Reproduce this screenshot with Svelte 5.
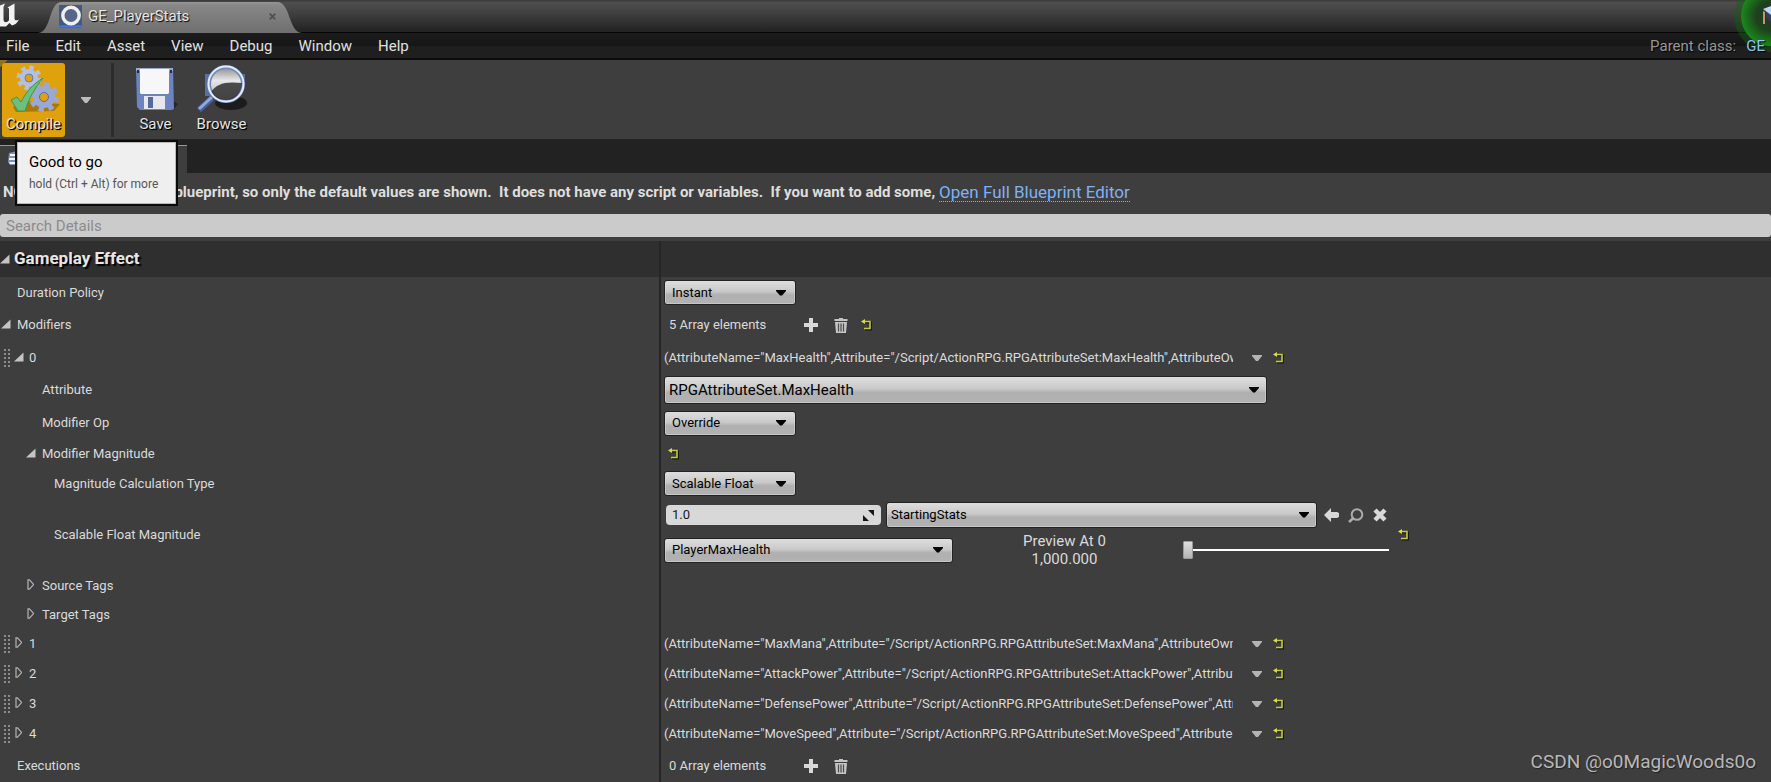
<script lang="ts">
	interface Row {
		id: string;
		label: string;
		size: string;
		depth: number;
		// null = leaf row without an expander
		open: boolean | null;
		kind: 'select' | 'array' | 'summary' | 'reset' | 'scalable' | 'none';
		value?: string;
		wide?: boolean;
		canReset?: boolean;
		element?: boolean;
	}

	const menus = ['File', 'Edit', 'Asset', 'View', 'Debug', 'Window', 'Help'];

	function summary(attr: string): string {
		return `(AttributeName="${attr}",Attribute="/Script/ActionRPG.RPGAttributeSet:${attr}",AttributeOwner="/Script/CoreUObject.Class'/Script/ActionRPG.RPGAttributeSet'")`;
	}

	const rows: Row[] = [
		{ id: 'duration', label: 'Duration Policy', size: 'h31', depth: 0, open: null, kind: 'select', value: 'Instant' },
		{ id: 'modifiers', label: 'Modifiers', size: 'h34', depth: 0, open: true, kind: 'array', value: '5 Array elements', canReset: true },
		{ id: 'm0', label: '0', size: 'h32', depth: 1, open: true, kind: 'summary', value: summary('MaxHealth'), element: true },
		{ id: 'attribute', label: 'Attribute', size: 'h32', depth: 2, open: null, kind: 'select', value: 'RPGAttributeSet.MaxHealth', wide: true },
		{ id: 'op', label: 'Modifier Op', size: 'h34', depth: 2, open: null, kind: 'select', value: 'Override' },
		{ id: 'magnitude', label: 'Modifier Magnitude', size: 'h28', depth: 2, open: true, kind: 'reset' },
		{ id: 'calc', label: 'Magnitude Calculation Type', size: 'h31', depth: 3, open: null, kind: 'select', value: 'Scalable Float' },
		{ id: 'scalable', label: 'Scalable Float Magnitude', size: 'h72', depth: 3, open: null, kind: 'scalable' },
		{ id: 'source', label: 'Source Tags', size: 'h30', depth: 2, open: false, kind: 'none' },
		{ id: 'target', label: 'Target Tags', size: 'h28', depth: 2, open: false, kind: 'none' },
		{ id: 'm1', label: '1', size: 'h30', depth: 1, open: false, kind: 'summary', value: summary('MaxMana'), element: true },
		{ id: 'm2', label: '2', size: 'h30', depth: 1, open: false, kind: 'summary', value: summary('AttackPower'), element: true },
		{ id: 'm3', label: '3', size: 'h30', depth: 1, open: false, kind: 'summary', value: summary('DefensePower'), element: true },
		{ id: 'm4', label: '4', size: 'h30', depth: 1, open: false, kind: 'summary', value: summary('MoveSpeed'), element: true },
		{ id: 'executions', label: 'Executions', size: 'h34', depth: 0, open: null, kind: 'array', value: '0 Array elements' }
	];

	let magnitude = $state('1.0');
	let preview = $state(0);
	let search = $state('');
</script>

{#snippet resetButton()}
	<button class="icon-btn reset" aria-label="Reset to default">
		<svg width="11" height="12" viewBox="0 0 11 12">
			<path d="M4 3.5h6v7H4" fill="none" stroke="#161616" stroke-width="2" />
			<path d="M3 2.5h6v7H3" fill="none" stroke="#c5cb3c" stroke-width="1.6" />
			<path d="M0 2.5L4 0v5z" fill="#d7dd3f" />
		</svg>
	</button>
{/snippet}

{#snippet dropdown(id: string, value: string, cls: string)}
	<span class="select {cls}">
		<select {id} aria-label={value}>
			<option>{value}</option>
		</select>
		<svg class="caret" width="10" height="6" viewBox="0 0 10 6"><path d="M0 0h10v1L6 5.5H4L0 1z" fill="#000" /></svg>
	</span>
{/snippet}

{#snippet expander(open: boolean, label: string)}
	<button class="icon-btn expander" aria-label="Expand {label}" aria-expanded={open}>
		{#if open}
			<svg width="10" height="10" viewBox="0 0 10 10"><path d="M9.5 0.5v9H0z" fill="#c4c4c4" /></svg>
		{:else}
			<svg width="10" height="11" viewBox="0 0 10 11"><path d="M2 .8h1.4l4 4.4v.6l-4 4.400H2z" fill="none" stroke="#b4b4b4" stroke-width="1.2" /></svg>
		{/if}
	</button>
{/snippet}

<div class="editor">
	<header class="titlebar">
		<svg class="logo" width="21" height="28" viewBox="0 0 21 28">
			<path d="M0 5.5L5 3.5 3.5 7v12.5c0 2 1.5 3 3 2.5 1.500-.3 2.500-1.200 2.500-2.500V8.500L7.500 7.500 14.500 3.500V18c0 2.500 1.500 3 4.500 1.500-1.500 3.500-4.500 5.500-7 6l-2.500-2.500-3.500 3.500H0z" fill="#f2f2f2" />
		</svg>
		<div class="asset-tab">
			<svg class="tab-shape" width="264" height="31" viewBox="0 0 264 31" preserveAspectRatio="none">
				<defs>
					<linearGradient id="tabfill" x1="0" y1="0" x2="0" y2="1">
						<stop offset="0" stop-color="#949494" />
						<stop offset=".12" stop-color="#878787" />
						<stop offset="1" stop-color="#6f6f6f" />
					</linearGradient>
				</defs>
				<path d="M0 31C14 30 10 0 24 0H239C253 0 250 30 264 31z" fill="url(#tabfill)" />
			</svg>
			<svg class="asset-icon" width="23" height="23" viewBox="0 0 23 23">
				<rect width="23" height="23" fill="#45587d" />
				<rect y="20.500" width="23" height="2" fill="#3f7af0" />
				<circle cx="12" cy="10.500" r="8.200" fill="#56668a" stroke="#f0f0ee" stroke-width="3.400" />
			</svg>
			<span class="asset-name">GE_PlayerStats</span>
			<button class="icon-btn tab-close" aria-label="Close tab">
				<svg width="7" height="7" viewBox="0 0 7 7"><path d="M.7.7l5.600 5.600M6.300.7L.7 6.300" stroke="#505050" stroke-width="1.800" /></svg>
			</button>
		</div>
		<svg class="tutorial" width="38" height="56" viewBox="0 0 38 56">
			<defs>
				<radialGradient id="glow">
					<stop offset="0" stop-color="#2c332c" />
					<stop offset=".5" stop-color="#1d421d" />
					<stop offset="1" stop-color="#198a19" />
				</radialGradient>
			</defs>
			<circle cx="37" cy="16" r="36" fill="#176017" opacity=".45" />
			<circle cx="38" cy="16" r="30" fill="url(#glow)" />
			<path d="M31 10l7-3v15l-5-4v-5z" fill="#2c405f" />
			<path d="M30 9l8-3v9z" fill="#bdd7f2" />
			<path d="M30 11l2 1v12h-2z" fill="#c09a61" />
		</svg>
	</header>

	<nav class="menubar">
		{#each menus as menu}
			<button class="menu">{menu}</button>
		{/each}
		<span class="parent-label">Parent class:</span>
		<a class="parent-link" href="#parent">GE</a>
	</nav>

	<div class="toolbar">
		<div class="compile-wrap">
			<button class="tool compile">
				<svg width="52" height="50" viewBox="0 0 52 50">
					<path d="M5 43l13-6 34 3-6 7-38 1z" fill="#6f4d08" opacity=".5" />
					<g fill="#b4bfe2">
						<circle cx="21" cy="14" r="9" />
						<circle cx="21" cy="14" r="10" fill="none" stroke="#b4bfe2" stroke-width="5" stroke-dasharray="4.200 3.650" />
						<circle cx="36" cy="33" r="11" fill="#9aa8d6" />
						<circle cx="36" cy="33" r="12" fill="none" stroke="#9aa8d6" stroke-width="6" stroke-dasharray="5 4.420" />
					</g>
					<circle cx="21" cy="14" r="4" fill="#dda20d" stroke="#6c7aa8" />
					<circle cx="36" cy="33" r="4.500" fill="#dda20d" stroke="#5f6da0" />
					<path d="M3 36l6-3 4 5c5-10 12-18 22-24-8 10-14 20-18 33h-7z" fill="#6cc07c" stroke="#3f9454" />
				</svg>
				<span>Compile</span>
			</button>
			<div class="tooltip" role="tooltip">
				<p>Good to go</p>
				<small>hold (Ctrl + Alt) for more</small>
			</div>
		</div>
		<button class="icon-btn options" aria-label="Compile options">
			<svg width="10" height="6" viewBox="0 0 10 6"><path d="M0 0h10v1L6 6H4L0 1z" fill="#bdbdbd" /></svg>
		</button>
		<span class="separator"></span>
		<button class="tool save">
			<svg width="52" height="50" viewBox="0 0 52 50">
				<path d="M14 45l28-9 6 4-5 6z" fill="#1d1d1d" opacity=".7" />
				<path d="M6 4h37l1 41-2 1H10l-3-3z" fill="#6c85c0" />
				<path d="M6 4h37v3H6z" fill="#9caad2" />
				<path d="M10 5h29v24l-1 1H11l-1-1z" fill="#f7f7f7" />
				<path d="M7 6h2v3H7zM40 6h2v3h-2z" fill="#222c45" />
				<path d="M14 32h21v13H14z" fill="#e6e7ec" />
				<path d="M18 33h5v11h-5z" fill="#53699f" />
			</svg>
			<span>Save</span>
		</button>
		<button class="tool browse">
			<svg width="52" height="50" viewBox="0 0 52 50">
				<defs>
					<linearGradient id="lens" x1="0" y1="0" x2="0" y2="1">
						<stop offset="0" stop-color="#8c8c8c" />
						<stop offset=".4" stop-color="#e8e8e8" />
						<stop offset="1" stop-color="#a8a8a8" />
					</linearGradient>
				</defs>
				<ellipse cx="35" cy="39" rx="16" ry="7" fill="#141414" opacity=".8" />
				<path d="M9 10h40v4L44 32H9z" fill="#5870a8" />
				<path d="M3 46l13-12" stroke="#475fa0" stroke-width="6" />
				<path d="M3 45l13-12" stroke="#93a8dc" stroke-width="3" />
				<circle cx="30" cy="20" r="17" fill="url(#lens)" stroke="#6f86bf" stroke-width="4" />
				<path d="M15 28c5-8 14-11 31-9-1 11-7 17-16 17-7 0-12-3-15-8z" fill="#303030" opacity=".85" />
				<circle cx="30" cy="20" r="17.500" fill="none" stroke="#e4eaf8" stroke-width="2" />
			</svg>
			<span>Browse</span>
		</button>
	</div>

	<div class="tabstrip">
		<div class="panel-tab">
			<svg width="12" height="14" viewBox="0 0 12 14">
				<path d="M1 2l8-2 3 2v12H2L0 11z" fill="#7f90ba" />
				<path d="M2 3h10v2H2zM1 7h11v2H1zM1 11h11v2H2z" fill="#f4f4f4" />
			</svg>
		</div>
	</div>

	<p class="note">
		<strong>NOTE: This is a data only blueprint, so only the default values are shown.&nbsp; It does not have any script or variables.&nbsp; If you want to add some,</strong>
		<a href="#full-editor">Open Full Blueprint Editor</a>
	</p>

	<div class="search">
		<input type="text" aria-label="Search Details" placeholder="Search Details" bind:value={search} />
	</div>

	<main class="details">
		<div class="row category">
			<div class="name">
				{@render expander(true, 'Gameplay Effect')}
				<h2>Gameplay Effect</h2>
			</div>
			<div class="value"></div>
		</div>

		{#each rows as row (row.id)}
			<div class="row {row.size}">
				<div class="name depth-{row.depth}">
					{#if row.element}
						<svg class="grip" width="8" height="18" viewBox="0 0 8 18">
							<path d="M2 0v18M6 0v18" stroke="#8c8c8c" stroke-width="2" stroke-dasharray="2 2" />
						</svg>
					{/if}
					{#if row.open !== null}
						{@render expander(row.open, row.label)}
					{/if}
					{#if row.kind === 'select' || row.kind === 'scalable'}
						<label for={row.id}>{row.label}</label>
					{:else}
						<span>{row.label}</span>
					{/if}
				</div>
				<div class="value">
					{#if row.kind === 'select'}
						{@render dropdown(row.id, row.value ?? '', row.wide ? 'wide' : 'small')}
					{:else if row.kind === 'array'}
						<span class="count">{row.value}</span>
						<button class="icon-btn add" aria-label="Add element">
							<svg width="14" height="14" viewBox="0 0 14 14"><path d="M5 0h4v5h5v4H9v5H5V9H0V5h5z" fill="#d8d8d8" /></svg>
						</button>
						<button class="icon-btn trash" aria-label="Remove all elements">
							<svg width="14" height="15" viewBox="0 0 14 15">
								<path d="M5 0h4v1h4.500v2H.5V1H5z" fill="#c4c4c4" />
								<path d="M1 4h12l-1 11H2z" fill="#c4c4c4" />
								<path d="M4.500 5.500v8M7 5.500v8M9.500 5.500v8" stroke="#4a4a4a" stroke-width="1.200" />
							</svg>
						</button>
						{#if row.canReset}{@render resetButton()}{/if}
					{:else if row.kind === 'summary'}
						<span class="summary">{row.value}</span>
						<button class="icon-btn more" aria-label="Element options">
							<svg width="10" height="6" viewBox="0 0 10 6"><path d="M0 0h10v1L6 6H4L0 1z" fill="#b4b4b4" /></svg>
						</button>
						{@render resetButton()}
					{:else if row.kind === 'reset'}
						<span class="only-reset">{@render resetButton()}</span>
					{:else if row.kind === 'scalable'}
						<div class="scalable">
							<div class="line">
								<span class="spin">
									<input type="text" id="scalable" bind:value={magnitude} />
									<svg width="11" height="11" viewBox="0 0 11 11"><path d="M5 0h6v6zM0 5v6h6z" fill="#151515" /></svg>
								</span>
								{@render dropdown('table', 'StartingStats', 'table')}
								<button class="icon-btn" aria-label="Use selected asset">
									<svg width="15" height="14" viewBox="0 0 15 14"><path d="M0 7l7-7v4h6l2 1v4l-2 1H7v4z" fill="#d8d8d8" /></svg>
								</button>
								<button class="icon-btn" aria-label="Browse to asset">
									<svg width="16" height="15" viewBox="0 0 16 15">
										<circle cx="9" cy="6.500" r="5.300" fill="none" stroke="#ababab" stroke-width="2" />
										<path d="M5.500 10L1 14" stroke="#ababab" stroke-width="2.600" />
									</svg>
								</button>
								<button class="icon-btn" aria-label="Clear">
									<svg width="14" height="14" viewBox="0 0 14 14"><path d="M2 2l10 10M12 2L2 12" stroke="#d8d8d8" stroke-width="4.400" /></svg>
								</button>
							</div>
							<div class="line second">
								{@render dropdown('curve', 'PlayerMaxHealth', 'curve')}
								<label class="preview" for="preview">Preview At {preview}<br />1,000.000</label>
								<input type="range" id="preview" min="0" max="20" bind:value={preview} />
							</div>
						</div>
						{@render resetButton()}
					{/if}
				</div>
			</div>
		{/each}
	</main>

	<div class="watermark">CSDN @o0MagicWoods0o</div>
</div>

<style>
	:global(body) {
		margin: 0;
		background: #3e3e3e;
	}

	.editor {
		position: relative;
		min-height: 100vh;
		overflow: hidden;
		background: #3e3e3e;
		color: #dadada;
		font-family: Roboto, "Liberation Sans", sans-serif;
		font-size: 13px;
		line-height: 18px;
	}

	button,
	input,
	select {
		font: inherit;
		color: inherit;
		margin: 0;
		padding: 0;
		border: 0;
		background: none;
		box-sizing: border-box;
	}

	svg {
		display: block;
		flex: none;
	}

	.icon-btn {
		display: flex;
		flex: none;
	}

	/* title bar */
	.titlebar {
		display: flex;
		height: 33px;
		box-sizing: border-box;
		background: linear-gradient(#383838, #4e4e4e 8%, #454545 30%, #242424 95%);
		border-bottom: 1px solid #050505;
	}

	.logo {
		margin-right: 17px;
	}

	.asset-tab {
		position: relative;
		display: flex;
		align-items: center;
		width: 264px;
		height: 31px;
		margin-top: 2px;
		padding: 0 26px 3px 21px;
		box-sizing: border-box;
	}

	.tab-shape {
		position: absolute;
		inset: 0;
	}

	.asset-icon,
	.asset-name,
	.tab-close {
		position: relative;
	}

	.asset-name {
		flex: 1;
		margin-left: 6px;
		font-size: 15px;
		color: #e6e6e6;
		text-shadow: 1px 1px 1px #000;
	}

	.tutorial {
		position: absolute;
		top: 0;
		right: 0;
	}

	/* menu bar */
	.menubar {
		display: flex;
		align-items: center;
		height: 27px;
		padding-right: 6px;
		box-sizing: border-box;
		border-bottom: 2px solid #0c0c0c;
		background: linear-gradient(#1c1c1c, #161616 50%, #1f1f1f 55%, #1f1f1f);
		font-size: 15px;
	}

	.menu {
		padding: 0 20px 0 6px;
		color: #e0e0e0;
	}

	.parent-label {
		margin-left: auto;
		color: #979797;
		text-shadow: 1px 1px 1px #000;
	}

	.parent-link {
		position: relative;
		margin-left: 10px;
		color: #8cc6f5;
		text-decoration: none;
		text-shadow: 1px 1px 1px #000;
	}

	/* toolbar */
	.toolbar {
		display: flex;
		align-items: center;
		height: 79px;
		padding: 0 2px;
		box-sizing: border-box;
		background: linear-gradient(135deg, #8a7420 5px, transparent 5px);
	}

	.compile-wrap {
		position: relative;
	}

	.tool {
		display: flex;
		flex-direction: column;
		align-items: center;
		width: 63px;
		height: 74px;
		padding-top: 1px;
		font-size: 15px;
		color: #e4e4e4;
		text-shadow: 1px 1px 1px #000, 1px 1px 0 #000;
	}

	.tool span {
		margin-top: 1px;
	}

	.compile {
		border-radius: 3px;
		background: #dfa20d;
	}

	.options {
		margin: 0 20px 0 16px;
	}

	.separator {
		width: 3px;
		height: 74px;
		background: #2c2c2c;
	}

	.save {
		margin-left: 10px;
	}

	.browse {
		margin-left: 3px;
	}

	.tooltip {
		position: absolute;
		z-index: 2;
		top: 77px;
		left: 13px;
		width: 163px;
		padding: 11px 12px;
		box-sizing: border-box;
		border: 2px solid #0a0a0a;
		background: #efefef;
		box-shadow: inset 0 0 0 1px #b9b9b9;
		white-space: nowrap;
	}

	.tooltip p {
		margin: 0 0 4px;
		font-size: 15px;
		color: #000;
	}

	.tooltip small {
		display: block;
		font-size: 12px;
		color: #555;
	}

	/* panel tab strip */
	.tabstrip {
		height: 34px;
		padding-top: 6px;
		box-sizing: border-box;
		background: #222;
	}

	.panel-tab {
		width: 187px;
		height: 28px;
		padding: 5px 8px;
		box-sizing: border-box;
		border-top: 1px solid #b8a012;
		background: #3e3e3e;
	}

	.note {
		display: flex;
		align-items: center;
		gap: 4px;
		height: 41px;
		margin: 0;
		padding: 0 3px 4px;
		box-sizing: border-box;
		font-size: 15px;
		white-space: nowrap;
		color: #dedede;
	}

	.note a {
		margin-top: 2px;
		font-size: 17px;
		color: #7fb2f4;
		text-decoration: none;
		border-bottom: 1px dotted #7fb2f4;
	}

	.search {
		display: flex;
		padding-bottom: 4px;
	}

	.search input {
		width: 100%;
		height: 23px;
		padding: 0 6px;
		border-radius: 3px;
		background: #cbcbcb;
		font-size: 15px;
		color: #222;
	}

	.search input::placeholder {
		color: #8b8b8b;
		opacity: 1;
	}

	/* details grid */
	.row {
		display: grid;
		grid-template-columns: 659fr 1112fr;
	}

	.h28 { min-height: 28px; }
	.h30 { min-height: 30px; }
	.h31 { min-height: 31px; }
	.h32 { min-height: 32px; }
	.h34 { min-height: 34px; }
	.h72 { min-height: 72px; }

	.category {
		min-height: 36px;
		background: #2f2f2f;
	}

	.category h2 {
		margin: 0 0 2px 4px;
		font-size: 17px;
		font-weight: 700;
		color: #e6e6e6;
		text-shadow: 2px 2px 1px #000;
	}

	.name,
	.value {
		display: flex;
		align-items: center;
		min-width: 0;
	}

	.name label,
	.name span {
		margin-left: 6px;
	}

	.depth-0 { padding-left: 11px; }
	.depth-1 { padding-left: 3px; }
	.depth-2 { padding-left: 36px; }
	.depth-3 { padding-left: 48px; }

	.depth-0 .expander,
	.depth-2 .expander {
		margin-left: -10px;
	}

	.depth-0 .expander,
	.depth-1 .expander,
	.depth-2 .expander {
		padding-bottom: 3px;
	}

	.grip {
		margin-right: 3px;
	}

	.depth-1 span {
		margin-left: 5px;
	}

	.value {
		padding-left: 3px;
		border-left: 2px solid #262626;
	}

	.select {
		position: relative;
		display: flex;
		align-items: center;
		height: 25px;
	}

	.select.small { width: 132px; }
	.select.wide { width: 603px; height: 28px; font-size: 15px; }
	.select.table { width: 431px; height: 26px; }
	.select.curve { width: 289px; }

	.select select {
		width: 100%;
		height: 100%;
		padding-left: 7px;
		appearance: none;
		border: 1px solid #232323;
		border-radius: 3px;
		background: linear-gradient(#dedede, #c9c9c9 45%, #b0b0b0 60%, #b2b2b2);
		box-shadow: inset 0 0 0 1px #dcdcdc80;
		color: #000;
	}

	.wide select,
	.table select {
		padding-left: 4px;
	}

	.caret {
		position: absolute;
		right: 10px;
		pointer-events: none;
	}

	.table .caret,
	.wide .caret {
		right: 8px;
	}

	.count {
		width: 135px;
		margin-left: 5px;
	}

	.trash {
		margin: 0 13px 0 16px;
	}

	.summary {
		width: 569px;
		overflow: hidden;
		white-space: nowrap;
	}

	.more {
		margin: 0 11px 0 19px;
	}

	.only-reset {
		margin-left: 4px;
	}

	.scalable {
		display: flex;
		flex-direction: column;
		gap: 4px;
		width: 734px;
	}

	.line {
		display: flex;
		align-items: center;
		gap: 9px;
	}

	.line .select.table {
		margin: 0 -2px 0 -4px;
	}

	.spin {
		display: flex;
		align-items: center;
		width: 215px;
		height: 20px;
		margin-left: 2px;
		padding: 0 7px 0 6px;
		box-sizing: border-box;
		border-radius: 4px;
		background: #d8d8d8;
		color: #1a1a1a;
	}

	.spin input {
		flex: 1;
		min-width: 0;
	}

	.second {
		gap: 0;
	}

	.preview {
		width: 223px;
		font-size: 15px;
		text-align: center;
	}

	input[type="range"] {
		appearance: none;
		width: 206px;
		height: 18px;
		margin-left: 7px;
		background: linear-gradient(#fff, #fff) center / 100% 2px no-repeat;
	}

	input[type="range"]::-webkit-slider-thumb {
		appearance: none;
		width: 10px;
		height: 18px;
		border: 1px solid #9a9a9a;
		border-radius: 1px;
		background: linear-gradient(#dedede, #b4b4b4);
	}

	.watermark {
		position: absolute;
		right: 15px;
		bottom: 9px;
		font-size: 19px;
		line-height: 24px;
		color: #b8b8b8;
		text-shadow: 1px 1px 1px #222;
	}
</style>
